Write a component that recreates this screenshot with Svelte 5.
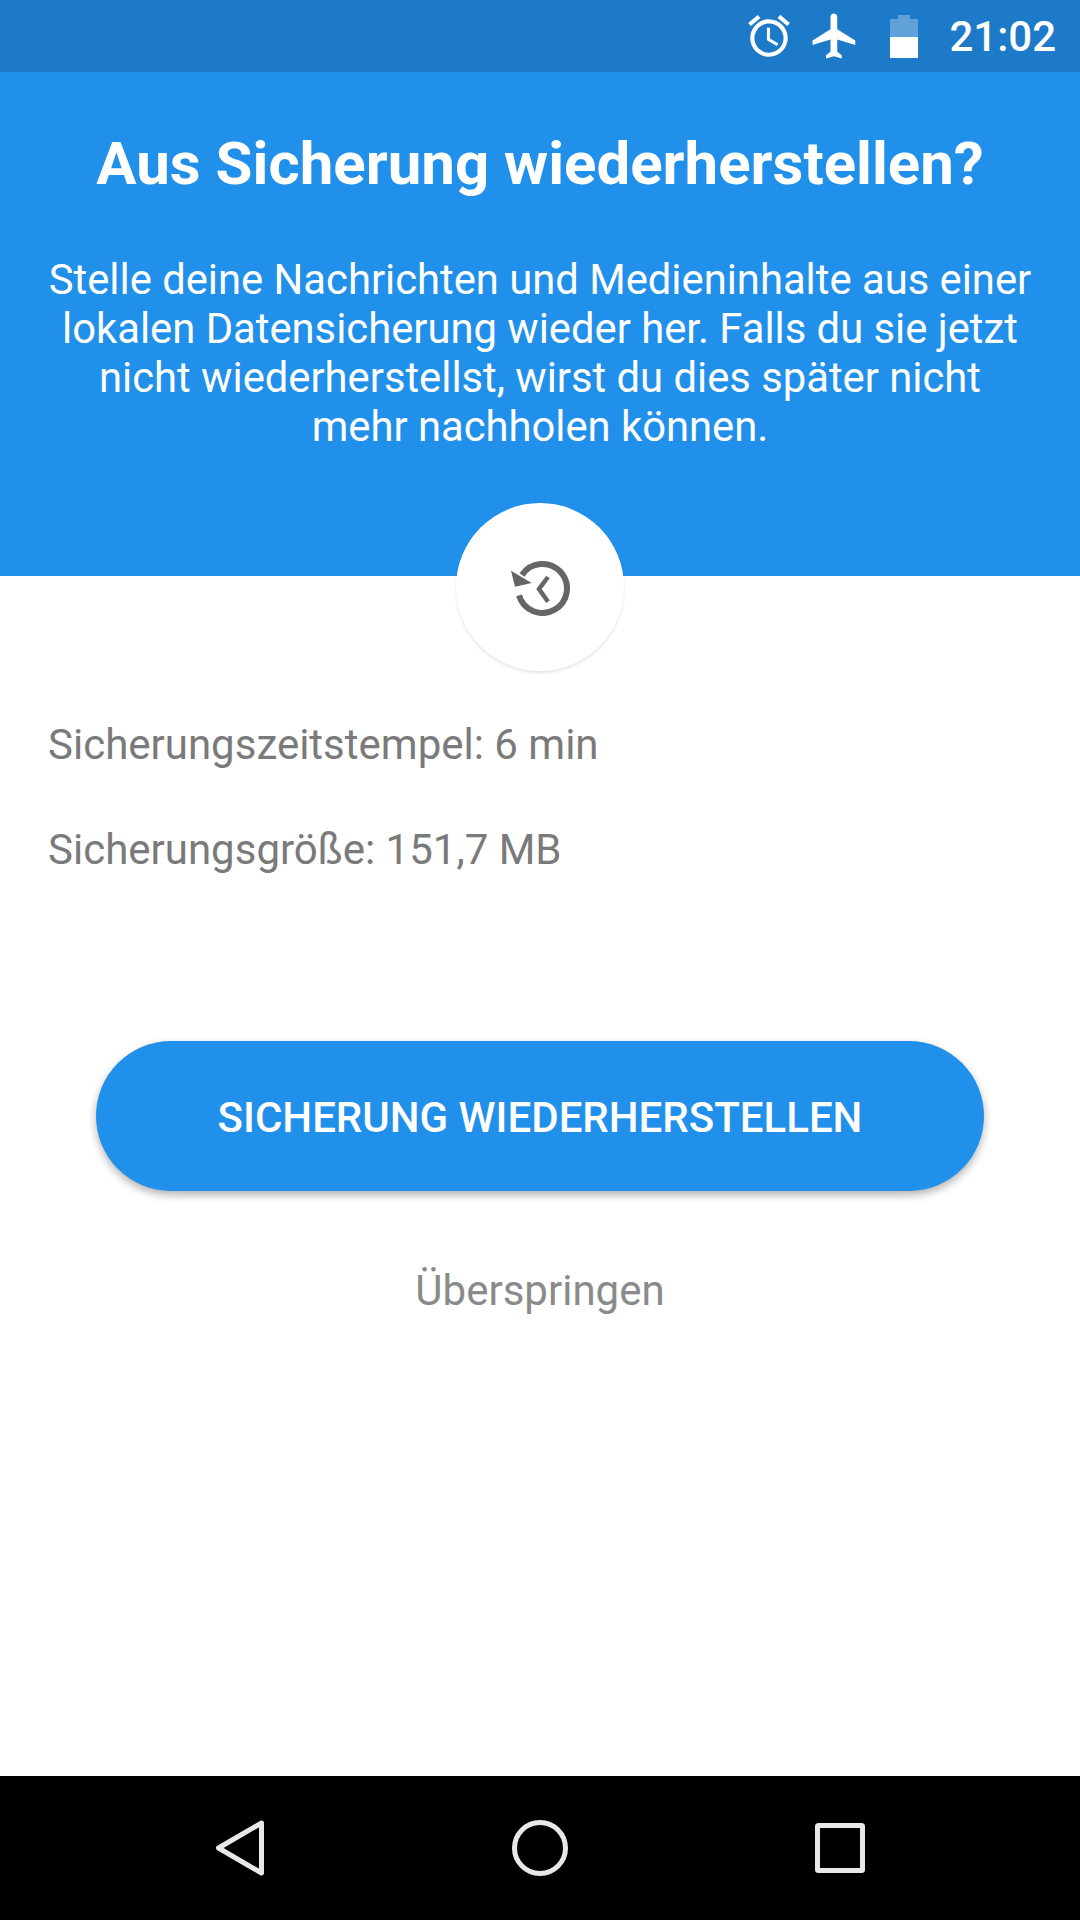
<script>
  const info = ['Sicherungszeitstempel: 6 min', 'Sicherungsgröße: 151,7 MB'];
</script>

<div class="screen">
  <div class="status-bar">
    <!-- alarm -->
    <svg class="alarm" viewBox="0 0 24 24" width="50" height="50">
      <path fill="#fff" d="M22 5.72l-4.6-3.86-1.29 1.53 4.6 3.86L22 5.72zM7.88 3.39L6.6 1.86 2 5.71l1.29 1.53 4.59-3.85zM12.5 8H11v6l4.75 2.85.75-1.23-4-2.37V8zM12 4c-4.97 0-9 4.03-9 9s4.03 9 9 9 9-4.03 9-9-4.03-9-9-9zm0 16c-3.87 0-7-3.13-7-7s3.13-7 7-7 7 3.13 7 7-3.13 7-7 7z"/>
    </svg>
    <!-- airplane mode -->
    <svg class="plane" viewBox="0 0 24 24" width="54" height="54">
      <path fill="#fff" d="M21 16v-2l-8-5V3.5c0-.83-.67-1.5-1.5-1.5S10 2.67 10 3.5V9l-8 5v2l8-2.5V19l-2 1.5V22l3.5-1 3.5 1v-1.5L13 19v-5.5l8 2.5z"/>
    </svg>
    <!-- battery -->
    <svg class="battery" viewBox="0 0 28 43" width="28" height="43">
      <path fill="#fff" fill-opacity="0.3" d="M0 22V4h8V0h12v4h8v18z"/>
      <path fill="#fff" d="M0 22h28v21H0z"/>
    </svg>
    <span class="time">21:02</span>
  </div>

  <header class="hero">
    <h1>Aus Sicherung wiederherstellen?</h1>
    <p>Stelle deine Nachrichten und Medieninhalte aus einer lokalen Datensicherung wieder her. Falls du sie jetzt nicht wiederherstellst, wirst du dies später nicht mehr nachholen können.</p>
    <div class="badge">
      <svg viewBox="510 558 60 58" width="60" height="58">
        <path fill="none" stroke="#666" stroke-width="6" d="M519 595.400A24.500 24.500 0 1 0 522 575"/>
        <path fill="#666" d="M511 570.700L531.700 583 515 586.700z"/>
        <path fill="none" stroke="#666" stroke-width="4.500" d="M548 577L539 589l9 12.700"/>
      </svg>
    </div>
  </header>

  <main class="content">
    <div class="info">
      {#each info as line}
        <div class="line">{line}</div>
      {/each}
    </div>
    <button class="restore">SICHERUNG WIEDERHERSTELLEN</button>
    <div class="skip">Überspringen</div>
  </main>

  <nav class="nav-bar">
    <svg viewBox="0 0 48 56" width="48" height="56">
      <path fill="none" stroke="#e8e8e8" stroke-width="5" stroke-linejoin="round" d="M45.500 3L2.500 28l43 25z"/>
    </svg>
    <svg viewBox="0 0 56 56" width="56" height="56">
      <circle cx="28" cy="28" r="25.500" fill="none" stroke="#e8e8e8" stroke-width="5"/>
    </svg>
    <svg viewBox="0 0 50 50" width="50" height="50">
      <rect x="2.500" y="2.500" width="45" height="45" rx="1" fill="none" stroke="#e8e8e8" stroke-width="5"/>
    </svg>
  </nav>
</div>

<style>
  :global(body) {
    margin: 0;
    background: #fff;
  }

  .screen {
    width: 1080px;
    height: 1920px;
    display: flex;
    flex-direction: column;
    font-family: Roboto, sans-serif;
    overflow: hidden;
  }

  .status-bar {
    height: 72px;
    flex: none;
    background: #1c7ac8;
    display: flex;
    align-items: center;
    justify-content: flex-end;
    color: #fff;
  }

  .alarm {
    margin-right: 14px;
  }

  .plane {
    margin-right: 28px;
  }

  .battery {
    margin-right: 31px;
  }

  .time {
    font-size: 42px;
    font-weight: 500;
    margin-right: 24px;
  }

  .hero {
    position: relative;
    height: 504px;
    flex: none;
    box-sizing: border-box;
    background: #2190ea;
    color: #fff;
    text-align: center;
    padding: 56px 48px 0;
  }

  h1 {
    margin: 0;
    font-size: 60px;
    line-height: 72px;
    font-weight: 700;
  }

  .hero p {
    margin: 55px 0 0;
    font-size: 41.75px;
    line-height: 49px;
  }

  .badge {
    position: absolute;
    left: 456px;
    top: 431px;
    width: 168px;
    height: 168px;
    border-radius: 50%;
    background: #fff;
    box-shadow: 0 2px 3px rgba(0, 0, 0, 0.1);
    display: flex;
    align-items: center;
    justify-content: center;
  }

  .content {
    flex: 1;
    display: flex;
    flex-direction: column;
    align-items: center;
  }

  .info {
    align-self: stretch;
    padding: 145px 48px 0;
    color: #7a7a7a;
    font-size: 42px;
    line-height: 47px;
  }

  .line + .line {
    margin-top: 58px;
  }

  .restore {
    margin-top: 168px;
    width: 888px;
    height: 150px;
    padding: 2px 0 0;
    border: none;
    border-radius: 75px;
    background: #2190ea;
    color: #fff;
    font-family: inherit;
    font-size: 42px;
    font-weight: 500;
    box-shadow: 0 4px 8px rgba(0, 0, 0, 0.3);
  }

  .skip {
    margin-top: 76px;
    color: #8a8a8a;
    font-size: 42px;
    line-height: 47px;
  }

  .nav-bar {
    height: 144px;
    flex: none;
    background: #000;
    display: grid;
    grid-template-columns: repeat(3, 300px);
    justify-content: center;
    align-items: center;
    justify-items: center;
  }
</style>
